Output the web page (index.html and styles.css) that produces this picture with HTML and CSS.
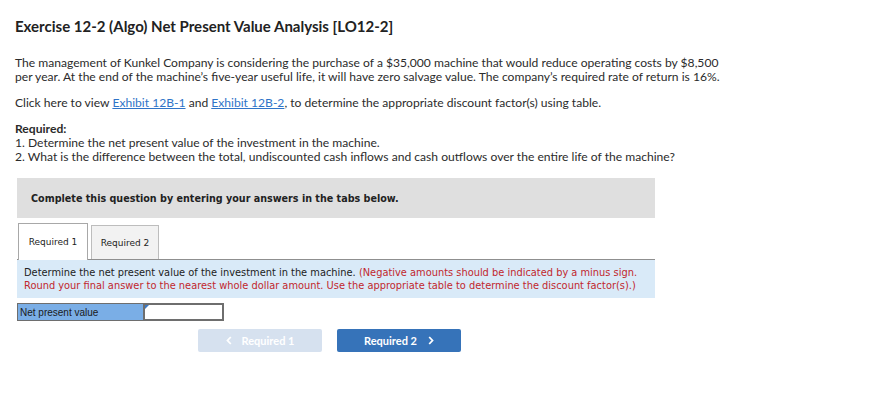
FILE: index.html
```html
<!DOCTYPE html>
<html>
<head>
<meta charset="utf-8">
<link rel="stylesheet" href="styles.css">
</head>
<body>
<div class="page">
  <h1 class="title">Exercise 12-2 (Algo) Net Present Value Analysis [LO12-2]</h1>
  <p class="intro">The management of Kunkel Company is considering the purchase of a $35,000 machine that would reduce operating costs by $8,500 per year. At the end of the machine’s five-year useful life, it will have zero salvage value. The company’s required rate of return is 16%.</p>
  <p class="click">Click here to view <a href="#">Exhibit 12B-1</a> and <a href="#">Exhibit 12B-2</a>, to determine the appropriate discount factor(s) using table.</p>
  <div class="req">
    <div class="req-head">Required:</div>
    <div>1. Determine the net present value of the investment in the machine.</div>
    <div>2. What is the difference between the total, undiscounted cash inflows and cash outflows over the entire life of the machine?</div>
  </div>
  <div class="question">
    <div class="banner">Complete this question by entering your answers in the tabs below.</div>
    <div class="tabs">
      <div class="tab active">Required 1</div>
      <div class="tab">Required 2</div>
    </div>
    <div class="instr">Determine the net present value of the investment in the machine. <span class="red">(Negative amounts should be indicated by a minus sign. Round your final answer to the nearest whole dollar amount. Use the appropriate table to determine the discount factor(s).)</span></div>
    <div class="row">
      <div class="label">Net present value</div>
      <div class="input"><span class="flag"></span></div>
    </div>
    <div class="nav">
      <div class="btn prev"><svg class="chev" width="6" height="9" viewBox="0 0 6 9"><path d="M4.8 1 L1.5 4.5 L4.8 8" fill="none" stroke="#fff" stroke-width="1.8"/></svg>Required 1</div>
      <div class="btn next">Required 2<svg class="chev" width="6" height="9" viewBox="0 0 6 9"><path d="M1.2 1 L4.5 4.5 L1.2 8" fill="none" stroke="#fff" stroke-width="1.8"/></svg></div>
    </div>
  </div>
</div>
</body>
</html>
```
FILE: styles.css
```css
html, body { margin: 0; padding: 0; background: #fff; }
.page {
  padding: 17px 0 0 15px;
  font-family: Lato, "Liberation Sans", sans-serif;
  color: #2b2b2b;
}
.title {
  margin: 0;
  font-size: 15px;
  font-weight: 700;
  line-height: 18px;
  color: #222;
}
.intro {
  margin: 21px 0 0;
  width: 720px;
  font-size: 12.1px;
  line-height: 14px;
}
.click {
  margin: 12px 0 0;
  font-size: 12.1px;
  line-height: 14px;
}
.click a { color: #2f74c8; text-decoration: underline; }
.req {
  margin-top: 12px;
  font-size: 12.1px;
  line-height: 14px;
}
.req-head { font-weight: 700; }
.question {
  margin: 14px 0 0 2px;
  width: 638px;
}
.banner {
  background: #dfdfdf;
  height: 40px;
  box-sizing: border-box;
  padding: 0 14px;
  display: flex;
  align-items: center;
  font-family: "DejaVu Sans", Verdana, sans-serif;
  font-size: 9.6px;
  font-weight: 700;
  color: #222;
}
.tabs {
  margin-top: 5px;
  display: flex;
  align-items: flex-end;
  gap: 3px;
  padding-left: 1px;
  border-bottom: 1px solid #8f8f8f;
}
.tab {
  font-family: "DejaVu Sans", Verdana, sans-serif;
  font-size: 9px;
  color: #222;
  border: 1px solid #bdbdbd;
  border-bottom: none;
  background: #f2f2f2;
  height: 34px;
  width: 68px;
  box-sizing: border-box;
  display: flex;
  align-items: center;
  justify-content: center;
}
.tab.active {
  background: #fff;
  width: 70px;
  border-color: #a8a8a8;
  margin-bottom: -1px;
  height: 37px;
}
.instr {
  background: #d9eaf8;
  padding: 6px 7px 6px 7px;
  font-family: "DejaVu Sans", Verdana, sans-serif;
  font-size: 9.85px;
  line-height: 13px;
  color: #222;
  height: 38px;
  box-sizing: border-box;
}
.red { color: #c1272d; }
.row {
  margin-top: 5px;
  display: flex;
  height: 18px;
}
.label {
  width: 126px;
  box-sizing: border-box;
  background: #7aaee6;
  border: 1px solid #6e6e6e;
  border-right: none;
  font-family: "Liberation Sans", Arial, sans-serif;
  font-size: 10px;
  line-height: 17px;
  padding-left: 2px;
  color: #1a1a1a;
}
.input {
  position: relative;
  width: 81px;
  box-sizing: border-box;
  background: #fff;
  border: 2px solid #6e6e6e;
}
.flag {
  position: absolute;
  left: 0;
  top: 0;
  width: 0;
  height: 0;
  border-top: 4px solid #3a78c4;
  border-right: 4px solid transparent;
}
.nav {
  margin-top: 8px;
  padding-left: 181px;
  display: flex;
  gap: 15px;
}
.btn {
  width: 124px;
  height: 23px;
  border-radius: 2px;
  display: flex;
  align-items: center;
  justify-content: center;
  font-family: Lato, "Liberation Sans", sans-serif;
  font-size: 11px;
  font-weight: 700;
  color: #fff;
}
.btn.prev { background: #d6e1ef; }
.btn.next { background: #3673b9; }
.chev { display: block; }
.btn.prev .chev { margin-right: 10px; }
.btn.next .chev { margin-left: 11px; }
```
